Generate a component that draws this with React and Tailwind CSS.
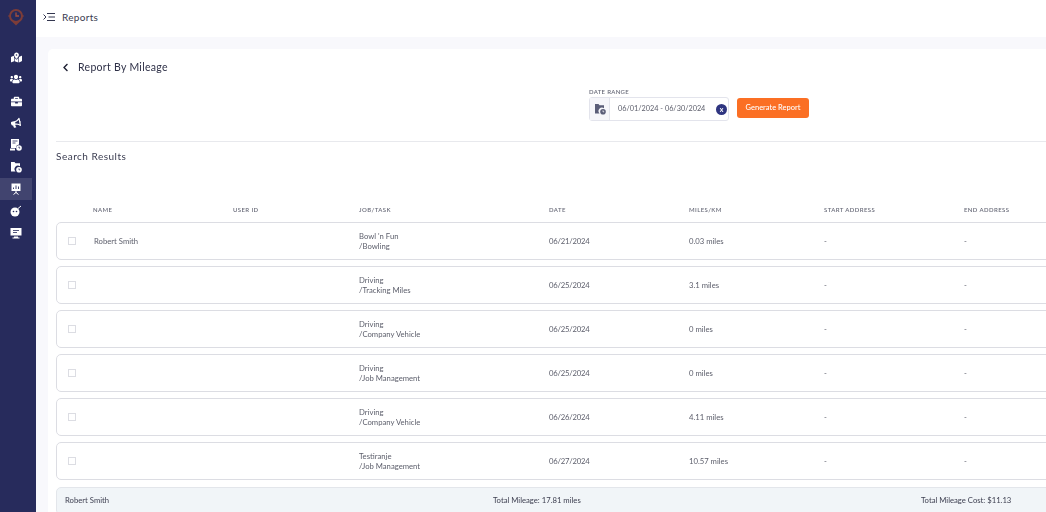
import React from "react";
import { FaBriefcase, FaBullhorn, FaChevronLeft, FaMapMarkedAlt, FaUsers } from "react-icons/fa";

const font = "font-['Lato','Liberation_Sans',sans-serif]";

const rows = [
  { name: "Robert Smith", job: "Bowl 'n Fun", task: "/Bowling", date: "06/21/2024", miles: "0.03 miles" },
  { name: "", job: "Driving", task: "/Tracking Miles", date: "06/25/2024", miles: "3.1 miles" },
  { name: "", job: "Driving", task: "/Company Vehicle", date: "06/25/2024", miles: "0 miles" },
  { name: "", job: "Driving", task: "/Job Management", date: "06/25/2024", miles: "0 miles" },
  { name: "", job: "Driving", task: "/Company Vehicle", date: "06/26/2024", miles: "4.11 miles" },
  { name: "", job: "Testiranje", task: "/Job Management", date: "06/27/2024", miles: "10.57 miles" },
];

function Logo() {
  return (
    <svg width="16" height="18" viewBox="0 0 16 18" fill="none">
      <path d="M8 17.500l-3.500-3.500h7z" fill="#7d3d38" />
      <circle cx="8" cy="8" r="6" stroke="#7d3d38" strokeWidth="2" />
      <path d="M8 4.500v3.500h3" stroke="#a34e3c" strokeWidth="1.300" />
      <path d="M0 8h2M14 8h2" stroke="#7d3d38" strokeWidth="1.200" />
    </svg>
  );
}

function ReportClock() {
  return (
    <svg width="12" height="12" viewBox="0 0 12 12" fill="white">
      <path d="M1 0h8v5.500a3.500 3.500 0 0 0-3 3.500H1z" />
      <path d="M2.500 2h5M2.500 4h3" stroke="#272b5c" strokeWidth="0.800" />
      <circle cx="9" cy="9" r="2.800" />
      <path d="M9 7.600V9h1.200" stroke="#272b5c" strokeWidth="0.800" fill="none" />
      <path d="M0 9.500h5v2H0z" />
    </svg>
  );
}

function FolderClock({ color = "white", hole = "#272b5c" }) {
  return (
    <svg width="12" height="12" viewBox="0 0 12 12" fill={color}>
      <path d="M1 1h3.500l1 1.200H10v3a3.500 3.500 0 0 0-4.500 5.300H1z" />
      <circle cx="9" cy="8.800" r="2.800" />
      <path d="M9 7.400v1.400h1.200" stroke={hole} strokeWidth="0.800" fill="none" />
    </svg>
  );
}

function Presentation() {
  return (
    <svg width="12" height="12" viewBox="0 0 12 12" fill="white">
      <path d="M1.500 0.500h9v7.500h-9z" />
      <path d="M3.500 6V4.500M6 6V2.500M8.500 6V3.500" stroke="#41446f" strokeWidth="1" />
      <path d="M6 8v2M3.500 11.500L6 9.500l2.500 2" stroke="white" strokeWidth="1" fill="none" />
    </svg>
  );
}

function Wrecking() {
  return (
    <svg width="12" height="12" viewBox="0 0 12 12" fill="white">
      <circle cx="5" cy="7" r="4.500" />
      <circle cx="3.500" cy="6.500" r="0.800" fill="#272b5c" />
      <circle cx="6.500" cy="6.500" r="0.800" fill="#272b5c" />
      <path d="M8 3.500L11 1" stroke="white" strokeWidth="1" />
    </svg>
  );
}

function Monitor() {
  return (
    <svg width="12" height="12" viewBox="0 0 12 12" fill="white">
      <path d="M0.500 1h11v7.500H0.500z" />
      <path d="M3 3.500h6M3 5.500h4" stroke="#272b5c" strokeWidth="0.800" />
      <path d="M4 9.500h4v1h1.500v1h-7v-1H4z" />
    </svg>
  );
}

function Sidebar() {
  const icons = [
    <FaMapMarkedAlt size={11} color="white" />,
    <FaUsers size={12} color="white" />,
    <FaBriefcase size={11} color="white" />,
    <FaBullhorn size={10} color="white" className="-rotate-12" />,
    <ReportClock />,
    <FolderClock />,
    <Presentation />,
    <Wrecking />,
    <Monitor />,
  ];
  return (
    <aside className="flex w-9 shrink-0 flex-col bg-[#272b5c]">
      <div className="flex h-[46px] w-8 shrink-0 items-center justify-center pb-3">
        <Logo />
      </div>
      {icons.map((icon, i) => (
        <div key={i} className={`flex h-[22px] w-8 items-center justify-center ${i === 6 ? "bg-[#41446f]" : ""}`}>
          {icon}
        </div>
      ))}
    </aside>
  );
}

function Row({ row }) {
  return (
    <div className="flex h-[38px] w-[1100px] shrink-0 items-center rounded-[5px] border border-[#dcdde3] bg-white text-[7.7px] leading-[10px] text-[#5c5e6b]">
      <div className="w-[37px] shrink-0 pl-[11px]">
        <div className="h-2 w-2 border border-[#dcdde3]" />
      </div>
      <div className="w-[265px] shrink-0">{row.name}</div>
      <div className="w-[190px] shrink-0">
        <div>{row.job}</div>
        <div>{row.task}</div>
      </div>
      <div className="w-[140px] shrink-0 tracking-[-0.2px]">{row.date}</div>
      <div className="w-[135px] shrink-0">{row.miles}</div>
      <div className="w-[140px] shrink-0">-</div>
      <div>-</div>
    </div>
  );
}

function Head() {
  return (
    <div className="flex h-[12px] items-center pl-[37px] text-[6px] font-semibold tracking-[0.4px] text-[#6a6c7a]">
      <div className="w-[140px] shrink-0">NAME</div>
      <div className="w-[126px] shrink-0">USER ID</div>
      <div className="w-[190px] shrink-0">JOB/TASK</div>
      <div className="w-[140px] shrink-0">DATE</div>
      <div className="w-[135px] shrink-0">MILES/KM</div>
      <div className="w-[140px] shrink-0">START ADDRESS</div>
      <div className="shrink-0">END ADDRESS</div>
    </div>
  );
}

export default function App() {
  return (
    <div className={`flex h-[512px] w-[1046px] overflow-hidden bg-[#f8f8fc] ${font}`}>
      <Sidebar />
      <div className="flex min-w-0 flex-1 flex-col">
        <header className="flex h-[37px] shrink-0 items-center gap-[7px] bg-white pl-[7px] pb-[3px]">
          <svg width="12" height="10" viewBox="0 0 12 10" fill="none" stroke="#33364f" strokeWidth="1">
            <path d="M4 1.500h8M5.500 5h6.500M4 8.500h8M0.500 2.500L3 5 0.500 7.500" />
          </svg>
          <span className="text-[10px] tracking-[0.3px] text-[#3a3c50]">Reports</span>
        </header>

        <main className="ml-3 mt-3 flex min-h-0 flex-1 flex-col rounded-tl-[5px] bg-white pl-2 will-change-transform">
          <div className="flex h-[36px] shrink-0 items-center gap-[8px] pl-[5px] pt-[1px]">
            <FaChevronLeft size={9} color="#1e2033" />
            <span className="text-[10.5px] tracking-[0.3px] text-[#2f3148]">Report By Mileage</span>
          </div>

          <div className="flex h-[57px] shrink-0 items-end gap-2 border-b border-[#e8e9ed] pb-[20px] pl-[533px]">
            <div className="flex flex-col gap-[2px]">
              <span className="text-[6px] font-semibold leading-[7px] tracking-[0.3px] text-[#6a6c7a]">DATE RANGE</span>
              <div className="flex h-6 w-[140px] items-center rounded-[3px] border border-[#e3e4ec]">
                <div className="flex h-full w-5 shrink-0 items-center justify-center border-r border-[#e3e4ec] bg-[#f6f6fa]">
                  <FolderClock color="#5b5e78" hole="#f6f6fa" />
                </div>
                <span className="ml-[8px] flex-1 whitespace-nowrap text-[7.3px] text-[#5c5e6b]">06/01/2024 - 06/30/2024</span>
                <div className="mr-[1px] flex h-[11px] w-[11px] items-center justify-center rounded-full bg-[#2f3580] text-[7px] leading-none font-bold text-white">x</div>
              </div>
            </div>
            <button className="mb-[3px] h-[20px] w-[72px] rounded-[3px] bg-[#fb6f24] text-[7.5px] font-medium text-white">Generate Report</button>
          </div>

          <div className="flex h-[31px] shrink-0 items-center pb-[2px] text-[10px] tracking-[0.5px] text-[#3a3c50]">Search Results</div>

          <div className="mt-[30px] flex flex-col">
            <Head />
            <div className="mt-[7px] flex flex-col gap-[6px]">
              {rows.map((row, i) => (
                <Row key={i} row={row} />
              ))}
              <div className="mt-[1px] flex h-[28px] w-[1100px] shrink-0 items-center rounded-[5px] border border-[#e3e6eb] bg-[#f1f5f8] pl-2 text-[7.7px] text-[#3f4152]">
                <div className="w-[428px] shrink-0">Robert Smith</div>
                <div className="w-[428px] shrink-0">Total Mileage: 17.81 miles</div>
                <div>Total Mileage Cost: $11.13</div>
              </div>
            </div>
          </div>
        </main>
      </div>
    </div>
  );
}
